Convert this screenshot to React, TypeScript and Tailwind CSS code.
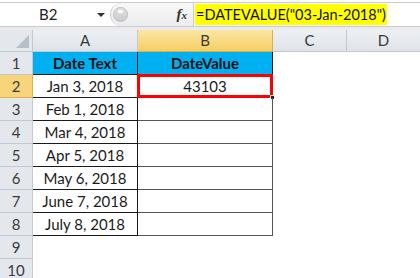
const font = { fontFamily: 'Lato, "Open Sans", "Liberation Sans", sans-serif' };

const rows: [string, string][] = [
  ['Jan 3, 2018', '43103'],
  ['Feb 1, 2018', ''],
  ['Mar 4, 2018', ''],
  ['Apr 5, 2018', ''],
  ['May 6, 2018', ''],
  ['June 7, 2018', ''],
  ['July 8, 2018', ''],
];

const RowHead = ({ n, active }: { n: number; active?: boolean }) => (
  <div
    className={`w-[33px] shrink-0 flex items-center justify-center border-b border-r text-[15px] ${
      active
        ? 'bg-[#f8d57a] border-[#e2b04b] text-[#3a3a3a]'
        : 'bg-[#e4e8ed] border-[#c3c9d1] text-[#3a3a3a]'
    }`}
  >
    {n}
  </div>
);

const App = () => {
  return (
    <div className="w-[420px] h-[278px] overflow-hidden bg-white text-[#1b1b1b]" style={font}>
      {/* formula bar */}
      <div className="pt-[2px] bg-white">
        <div className="flex h-[25px] border-t border-b border-[#c9cdd3] bg-white">
          <div className="w-[110px] relative flex items-center">
            <span className="ml-[39px] text-[15px] text-[#222]">B2</span>
            <span className="absolute left-[97px] top-[10px] w-0 h-0 border-l-[4px] border-r-[4px] border-t-[4px] border-l-transparent border-r-transparent border-t-[#333]" />
          </div>
          <div className="w-[83px] flex items-center bg-gradient-to-b from-[#f8f8f8] to-[#ececec] rounded-l-full border-l border-[#c9cdd3]">
            <span className="ml-[2px] w-[15px] h-[15px] rounded-full bg-gradient-to-b from-[#e2e2e2] to-[#cbcbcb] border border-[#bdbdbd] flex items-start justify-center pt-[2px]">
              <span className="w-[5px] h-[3px] rounded-full bg-white" />
            </span>
            <span
              className="ml-auto mr-[6px] text-[15px] italic font-bold text-[#333]"
              style={{ fontFamily: '"Liberation Serif", serif' }}
            >
              f<span className="text-[11px]">x</span>
            </span>
          </div>
          <div className="flex-1 flex items-center border-l border-[#c9cdd3] pl-[1px]">
            <span className="bg-[#ffff00] text-[14.5px] leading-[21px] px-[1px] text-[#111]">
              =DATEVALUE("03-Jan-2018")
            </span>
          </div>
        </div>
        <div className="h-[3px] bg-[#e9ebee]" />
      </div>

      {/* column headers */}
      <div className="flex h-[22px] text-[15px] text-[#3a3a3a]">
        <div className="w-[33px] shrink-0 relative bg-[#e4e8ed] border-r border-b border-[#c3c9d1]">
          <svg className="absolute right-[3px] bottom-[3px]" width="13" height="13" viewBox="0 0 13 13">
            <polygon points="13,0 13,13 0,13" fill="#b8bec6" />
          </svg>
        </div>
        <div className="w-[105px] shrink-0 flex items-center justify-center bg-gradient-to-b from-[#eef0f3] to-[#dfe3e8] border-r border-b border-[#c3c9d1]">
          A
        </div>
        <div className="w-[135px] shrink-0 flex items-center justify-center bg-gradient-to-b from-[#fbe6a2] to-[#f5cf62] border-r border-b border-[#e0ad45]">
          B
        </div>
        <div className="w-[74px] shrink-0 flex items-center justify-center bg-gradient-to-b from-[#eef0f3] to-[#dfe3e8] border-r border-b border-[#c3c9d1]">
          C
        </div>
        <div className="flex-1 flex items-center justify-center bg-gradient-to-b from-[#eef0f3] to-[#dfe3e8] border-b border-[#c3c9d1]">
          D
        </div>
      </div>

      {/* row 1 header */}
      <div className="flex h-[23px]">
        <RowHead n={1} />
        <div className="w-[105px] shrink-0 flex items-center justify-center bg-[#00b0f0] border-r border-b border-[#1a1a1a] text-[15px] font-bold text-[#111]">
          Date Text
        </div>
        <div className="w-[135px] shrink-0 flex items-center justify-center bg-[#00b0f0] border-r border-b border-[#1a1a1a] text-[15px] font-bold text-[#111]">
          DateValue
        </div>
        <div className="flex-1" />
      </div>

      {rows.map(([a, b], i) => (
        <div key={i} className="flex h-[23px]">
          <RowHead n={i + 2} active={i === 0} />
          <div className="w-[105px] shrink-0 flex items-center justify-center border-r border-b border-[#1a1a1a] text-[15px]">
            {a}
          </div>
          <div className="w-[135px] shrink-0 relative flex items-center justify-center border-r border-b border-[#555] text-[15px]">
            {b}
            {i === 0 && (
              <>
                <span className="absolute -left-[1px] -top-[1px] -right-[1px] -bottom-[1px] border-[3px] border-[#ff0000]" />
                <span className="absolute -right-[3px] -bottom-[3px] w-[5px] h-[5px] bg-[#222] border border-white" />
              </>
            )}
          </div>
          <div className="flex-1" />
        </div>
      ))}

      {[9, 10].map((n) => (
        <div key={n} className="flex h-[23px]">
          <RowHead n={n} />
          <div className="flex-1" />
        </div>
      ))}
    </div>
  );
};

export default App;
